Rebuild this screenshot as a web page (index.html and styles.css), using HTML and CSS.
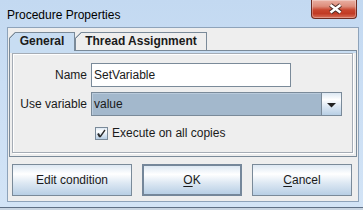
FILE: index.html
```html
<!DOCTYPE html>
<html>
<head>
<meta charset="utf-8">
<link rel="stylesheet" href="styles.css">
</head>
<body>
<div class="window">
  <div class="titlebar">
    <span class="title">Procedure Properties</span>
    <div class="close">
      <svg width="44" height="18" viewBox="0 0 44 18">
        <path d="M18.5 5 L28.5 12.5 M28.5 5 L18.5 12.5" stroke="#4b2c27" stroke-width="4.6" fill="none"/>
        <path d="M18.5 5 L28.5 12.5 M28.5 5 L18.5 12.5" stroke="#ffffff" stroke-width="2.6" fill="none"/>
      </svg>
    </div>
  </div>
  <div class="client">
    <div class="tabs">
      <div class="tab selected">General</div>
      <div class="tab other">Thread Assignment</div>
    </div>
    <div class="tabbody">
      <div class="panel">
        <div class="form">
          <span class="lbl">Name</span>
          <div class="field">SetVariable</div>
          <span class="lbl">Use variable</span>
          <div class="combo">
            <span class="value">value</span>
            <span class="arrow">
              <svg width="19" height="22" viewBox="0 0 19 22"><polygon points="5,10 14,10 9.5,14.5" fill="#222"/></svg>
            </span>
          </div>
          <div class="check">
            <span class="box">
              <svg width="11" height="11" viewBox="0 0 11 11">
                <path d="M2 5.5 L4 9" stroke="#2a2a2a" stroke-width="2" fill="none"/>
                <path d="M4 9 L9 2" stroke="#2a2a2a" stroke-width="1.3" fill="none"/>
              </svg>
            </span>
            <span>Execute on all copies</span>
          </div>
        </div>
      </div>
    </div>
    <div class="buttons">
      <div class="btn edit">Edit condition</div>
      <div class="btn ok"><span><u>O</u>K</span></div>
      <div class="btn cancel"><span><u>C</u>ancel</span></div>
    </div>
  </div>
  <div class="frame-bottom"></div>
</div>
</body>
</html>
```
FILE: styles.css
```css
* { box-sizing: border-box; margin: 0; padding: 0; }
html, body { width: 363px; height: 210px; overflow: hidden; }
body {
  font-family: "Liberation Sans", Arial, sans-serif;
  font-size: 12px;
  color: #1a1a1a;
}
.window {
  width: 363px;
  height: 210px;
  display: flex;
  flex-direction: column;
  background: linear-gradient(to bottom, #c3d9f1 0%, #cadef4 40%, #d3e4f6 100%);
}
.titlebar {
  height: 27px;
  flex: none;
  display: flex;
  align-items: flex-start;
}
.title {
  padding: 8px 0 0 7px;
  line-height: 14px;
  color: #000;
}
.close {
  margin-left: auto;
  margin-right: 6px;
  width: 46px;
  height: 19px;
  border: 1px solid #6e2c22;
  border-top: none;
  border-radius: 0 0 4px 4px;
  background: linear-gradient(to bottom, #eab0a3 0%, #dd8d7b 35%, #c9462f 55%, #c13b25 75%, #d8705a 100%);
  box-shadow: inset 0 0 0 1px rgba(255, 255, 255, 0.3);
  display: flex;
}
.client {
  flex: none;
  height: 175px;
  margin: 0 4px 0 7px;
  border: 1px solid #8ea3ba;
  background: #eeeeee;
  padding: 4px 1px 5px 1px;
  display: flex;
  flex-direction: column;
}
.tabs {
  display: flex;
  height: 18px;
  flex: none;
}
.tab {
  height: 18px;
  border: 1px solid #7a8a99;
  border-bottom: none;
  font-weight: bold;
  text-align: center;
  line-height: 17px;
  color: #1a1a1a;
  clip-path: polygon(6px 0, 100% 0, 100% 100%, 0 100%, 0 6px);
  background-origin: border-box;
}
.tab.selected {
  width: 66px;
  height: 19px;
  margin-bottom: -1px;
  position: relative;
  z-index: 1;
  background-image: linear-gradient(135deg, #7a8a99 0, #7a8a99 5.3px, #c8ddf2 5.3px);
}
.tab.other {
  width: 132px;
  background-image: linear-gradient(135deg, #7a8a99 0, #7a8a99 5.3px, #eeeeee 5.3px);
}
.tabbody {
  height: 107px;
  flex: none;
  border: 1px solid #7a8a99;
  padding: 2px 3px 3px 2px;
  background: linear-gradient(to bottom, #c8ddf2 0, #c8ddf2 2px, #eeeeee 2px);
  background-origin: padding-box;
}
.panel {
  height: 100px;
  border: 1px solid #a5acb5;
  box-shadow: inset 1px 1px 0 #ffffff, 1px 1px 0 #ffffff;
  padding: 9px 0 0 6px;
}
.form {
  display: grid;
  grid-template-columns: 68px auto;
  column-gap: 4px;
  row-gap: 5px;
  align-items: center;
  justify-items: start;
}
.lbl {
  justify-self: end;
  line-height: 14px;
  color: #1a1a1a;
}
.field {
  width: 200px;
  height: 24px;
  border: 1px solid #7a8a99;
  background: #ffffff;
  padding-left: 2px;
  line-height: 22px;
  color: #1a1a1a;
}
.combo {
  width: 251px;
  height: 24px;
  display: flex;
  border: 1px solid #7a8a99;
  background: #a3b8cc;
  box-shadow: inset 1px 1px 0 #b9cadb;
}
.combo .value {
  flex: 1;
  padding-left: 2px;
  line-height: 22px;
  color: #1a1a1a;
}
.combo .arrow {
  width: 20px;
  border-left: 1px solid #7a8a99;
  background: linear-gradient(to bottom, #dde8f3 0%, #ffffff 30%, #dde8f3 60%, #b8cfe5 100%);
  display: flex;
}
.check {
  grid-column: 2;
  margin-top: 6px;
  margin-left: 4px;
  display: flex;
  align-items: center;
  gap: 4px;
  line-height: 13px;
  color: #1a1a1a;
}
.box {
  width: 13px;
  height: 13px;
  border: 1px solid #7a8a99;
  background: linear-gradient(to bottom, #dde8f3 0%, #ffffff 30%, #dde8f3 60%, #b8cfe5 100%);
  display: flex;
}
.buttons {
  display: flex;
  gap: 10px;
  margin-top: 7px;
  margin-left: 3px;
  flex: none;
}
.btn {
  height: 32px;
  border: 1px solid #7a8a99;
  background: linear-gradient(to bottom, #dde8f3 0%, #ffffff 30%, #dde8f3 60%, #b8cfe5 100%);
  display: flex;
  align-items: center;
  justify-content: center;
  line-height: 14px;
  color: #1a1a1a;
}
.btn.edit { width: 120px; }
.btn.ok { width: 100px; border: 2px solid #75879a; }
.btn.cancel { width: 100px; }
.btn u { text-underline-offset: 2px; }
.frame-bottom {
  flex: 1;
  background: linear-gradient(to bottom, transparent 0, transparent 5px, #5f7085 5px, #5f7085 6px, #c9d5e2 6px);
}
```
